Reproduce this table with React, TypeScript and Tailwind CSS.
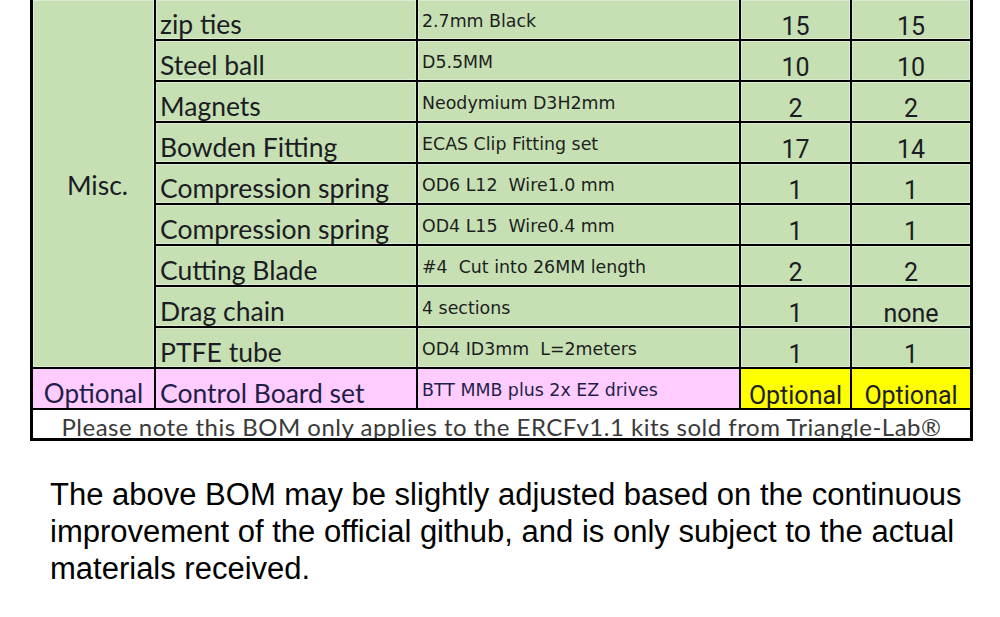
import React from 'react';

type Item = { name: string; spec: string; a: string; b: string };

const items: Item[] = [
  { name: 'zip ties', spec: '2.7mm Black', a: '15', b: '15' },
  { name: 'Steel ball', spec: 'D5.5MM', a: '10', b: '10' },
  { name: 'Magnets', spec: 'Neodymium D3H2mm', a: '2', b: '2' },
  { name: 'Bowden Fitting', spec: 'ECAS Clip Fitting set', a: '17', b: '14' },
  { name: 'Compression spring', spec: 'OD6 L12  Wire1.0 mm', a: '1', b: '1' },
  { name: 'Compression spring', spec: 'OD4 L15  Wire0.4 mm', a: '1', b: '1' },
  { name: 'Cutting Blade', spec: '#4  Cut into 26MM length', a: '2', b: '2' },
  { name: 'Drag chain', spec: '4 sections', a: '1', b: 'none' },
  { name: 'PTFE tube', spec: 'OD4 ID3mm  L=2meters', a: '1', b: '1' },
];

const green = 'bg-[#c6e0b4] shadow-[inset_0_0_0_1px_#dcebd2]';
const nameCls = "flex items-end pl-[4px] font-['Lato',sans-serif] text-[26.5px] leading-[30px] text-[#1c1c24] whitespace-nowrap";
const specCls = "flex items-center pl-[4px] pt-[3px] font-['DejaVu_Sans',sans-serif] text-[17.4px] text-[#1e1e1e] whitespace-pre";
const qtyCls = "flex items-end justify-center font-['Roboto',sans-serif] text-[25px] leading-[25px] text-[#1c1c24]";

export default function App() {
  return (
    <div className="w-[1000px] h-[617px] bg-white overflow-hidden">
      {/* BOM table */}
      <div className="ml-[30px] w-[943px] border-x-[3px] border-b-[3px] border-black bg-black grid grid-cols-[121px_260px_321px_109px_118px] grid-rows-[repeat(10,39px)_28px] gap-[2px]">
        <div className={`${green} row-span-9 flex items-center justify-center pl-[8px] pt-[4px] font-['Lato',sans-serif] text-[26.5px] text-[#1c1c24]`}>
          Misc.
        </div>
        {items.map((it, i) => (
          <React.Fragment key={i}>
            <div className={`${green} ${nameCls}`}>{it.name}</div>
            <div className={`${green} ${specCls}`}>{it.spec}</div>
            <div className={`${green} ${qtyCls}`}>{it.a}</div>
            <div className={`${green} ${qtyCls}`}>{it.b}</div>
          </React.Fragment>
        ))}

        {/* optional row */}
        <div className="bg-[#ffccff] flex items-end justify-center font-['Lato',sans-serif] text-[26px] leading-[30px] text-[#1f1f4a]">
          Optional
        </div>
        <div className={`bg-[#ffccff] ${nameCls} text-[#1f1f4a]`}>Control Board set</div>
        <div className={`bg-[#ffccff] ${specCls} text-[#1f1f4a]`}>BTT MMB plus 2x EZ drives</div>
        <div className={`bg-[#ffff00] ${qtyCls}`}>Optional</div>
        <div className={`bg-[#ffff00] ${qtyCls}`}>Optional</div>

        <div className="col-span-5 bg-white flex items-end justify-center overflow-hidden font-['Lato',sans-serif] text-[24px] leading-[22px] tracking-[0.5px] text-[#3a3a3a] whitespace-nowrap">
          Please note this BOM only applies to the ERCFv1.1 kits sold from Triangle-Lab®
        </div>
      </div>

      <p className="mt-[35px] ml-[50px] w-[920px] font-['Liberation_Sans',Arial,sans-serif] text-[31px] leading-[37px] text-black">
        The above BOM may be slightly adjusted based on the continuous improvement of the official github, and is only subject to the actual materials received.
      </p>
    </div>
  );
}
